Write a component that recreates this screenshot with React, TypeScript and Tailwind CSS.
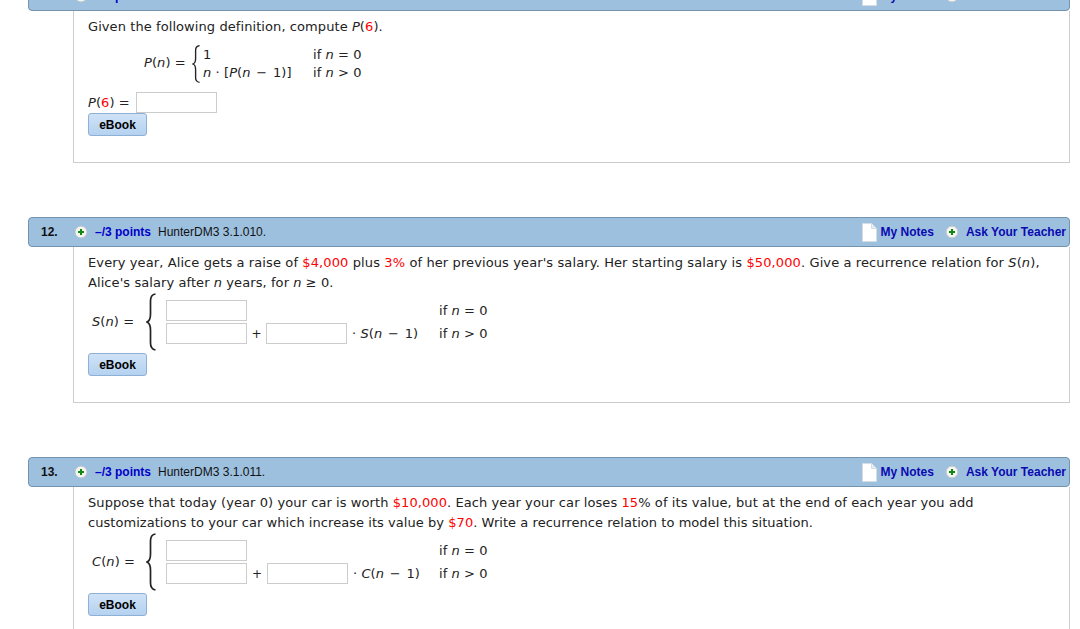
import React from 'react';

const Red: React.FC<{ children: React.ReactNode }> = ({ children }) => <span className="text-[#ff0000]">{children}</span>;
const V: React.FC<{ children: React.ReactNode }> = ({ children }) => <i>{children}</i>;
const Minus: React.FC = () => <span className="mx-[1.5px]">−</span>;

const PlusIcon: React.FC = () => (
    <svg width="14" height="14" viewBox="0 0 14 14" className="shrink-0">
        <circle cx="7" cy="7" r="6" fill="#f4f4f0" stroke="#b9c4cc" />
        <path d="M7 4v6M4 7h6" stroke="#118a11" strokeWidth="2" />
    </svg>
);

const NoteIcon: React.FC = () => (
    <svg width="15" height="19" viewBox="0 0 15 19" className="shrink-0">
        <path d="M.5.5h9l5 5v13H.5z" fill="#fff" stroke="#d5dde3" />
        <path d="M9.5.5v5h5" fill="#e9edf0" stroke="#d5dde3" />
    </svg>
);

const Brace: React.FC<{ width: number; height: number }> = ({ width, height }) => (
    <svg width={width} height={height} viewBox="0 0 10 58" preserveAspectRatio="none" className="shrink-0">
        <path d="M9.500 1C6 1.500 4.500 4 4.500 8v13c0 4-1 7-3.500 8 2.500 1 3.500 4 3.500 8v13c0 4 1.500 6.500 5 7" fill="none" stroke="#222" strokeWidth="1.700" />
    </svg>
);

const Box: React.FC = () => (
    <div className="w-[81px] h-[21px] border border-[#cccccc] bg-white shrink-0" />
);

const EBook: React.FC = () => (
    <button className="block w-[59px] h-[23px] rounded-[3px] border border-[#8fb0d6] bg-gradient-to-b from-[#cfe2f6] to-[#b4d2f0] text-[12px] font-bold text-black tracking-normal font-['Liberation_Sans',sans-serif]">
        eBook
    </button>
);

const Header: React.FC<{ num: string; code: string; first?: boolean }> = ({ num, code, first }) => (
    <div className={`flex items-center h-[30px] rounded-[4px] border border-[#7593ad] bg-[#9dc0df] text-[12px] font-['Liberation_Sans',sans-serif] ${first ? '-mt-[19px]' : ''}`}>
        <b className="ml-[12px] w-[33px] text-[#111]">{num}</b>
        <PlusIcon />
        <b className="ml-[7px] text-[#0000c8]">–/3 points</b>
        <span className="ml-[7px] text-[#111]">{code}</span>
        <div className="ml-auto flex items-center mr-[3px]">
            <NoteIcon />
            <b className="ml-[4px] text-[#0a0ab0]">My Notes</b>
            <span className="ml-[11px]"><PlusIcon /></span>
            <b className="ml-[7px] text-[#0a0ab0]">Ask Your Teacher</b>
        </div>
    </div>
);

const Body: React.FC<{ children: React.ReactNode; height: string }> = ({ children, height }) => (
    <div className={`ml-[45px] pl-[14px] pt-[6px] border-l border-r border-b border-[#cccccc] text-[13px] leading-[20px] tracking-[0.08px] text-[#222] ${height}`}>
        {children}
    </div>
);

const Recurrence: React.FC<{ name: string; plusWidth: string; termWidth: string }> = ({ name, plusWidth, termWidth }) => (
    <div className="flex items-center h-[58px]">
        <span className="w-[58px] pl-[4px] shrink-0"><V>{name}</V>(<V>n</V>) =</span>
        <Brace width={10} height={58} />
        <div className="ml-[10px] flex flex-col gap-[2px]">
            <div className="flex items-center h-[21px]">
                <Box />
                <span className="ml-[192px]">if <V>n</V> = 0</span>
            </div>
            <div className="flex items-center h-[21px]">
                <Box />
                <span className={`text-[12px] text-center shrink-0 ${plusWidth}`}>+</span>
                <Box />
                <span className={`ml-[5px] shrink-0 ${termWidth}`}>· <V>{name}</V>(<V>n</V> <Minus /> 1)</span>
                <span>if <V>n</V> &gt; 0</span>
            </div>
        </div>
    </div>
);

export default function App() {
    return (
        <div className="w-[1080px] h-[629px] overflow-hidden bg-white font-['DejaVu_Sans',sans-serif]">
            <div className="ml-[28px] w-[1042px]">
                <Header num="11." code="HunterDM3 3.1.009." first />
                <Body height="h-[152px]">
                    <p>Given the following definition, compute <V>P</V>(<Red>6</Red>).</p>
                    <div className="flex items-center h-[40px] mt-[7px] ml-[56px]">
                        <span className="w-[48px] pb-[2px] shrink-0"><V>P</V>(<V>n</V>) =</span>
                        <Brace width={8} height={38} />
                        <div className="ml-[3px] grid grid-cols-[110px_auto] leading-[18px]">
                            <span>1</span>
                            <span>if <V>n</V> = 0</span>
                            <span><V>n</V> · [<V>P</V>(<V>n</V> <Minus /> 1)]</span>
                            <span>if <V>n</V> &gt; 0</span>
                        </div>
                    </div>
                    <div className="flex items-center h-[21px] mt-[8px]">
                        <span className="w-[48px] shrink-0"><V>P</V>(<Red>6</Red>) =</span>
                        <Box />
                    </div>
                    <EBook />
                </Body>
                <div className="h-[54px]" />
                <Header num="12." code="HunterDM3 3.1.010." />
                <Body height="h-[156px]">
                    <p className="tracking-[0.11px]">Every year, Alice gets a raise of <Red>$4,000</Red> plus <Red>3%</Red> of her previous year's salary. Her starting salary is <Red>$50,000</Red>. Give a recurrence relation for <V>S</V>(<V>n</V>),</p>
                    <p>Alice's salary after <V>n</V> years, for <V>n</V> ≥ 0.</p>
                    <Recurrence name="S" plusWidth="w-[19px]" termWidth="w-[87px]" />
                    <div className="h-[2px]" />
                    <EBook />
                </Body>
                <div className="h-[54px]" />
                <Header num="13." code="HunterDM3 3.1.011." />
                <Body height="h-[200px]">
                    <p>Suppose that today (year 0) your car is worth <Red>$10,000</Red>. Each year your car loses <Red>15</Red>% of its value, but at the end of each year you add</p>
                    <p className="tracking-[0.05px]">customizations to your car which increase its value by <Red>$70</Red>. Write a recurrence relation to model this situation.</p>
                    <Recurrence name="C" plusWidth="w-[20px]" termWidth="w-[86px]" />
                    <div className="h-[2px]" />
                    <EBook />
                </Body>
            </div>
        </div>
    );
}
